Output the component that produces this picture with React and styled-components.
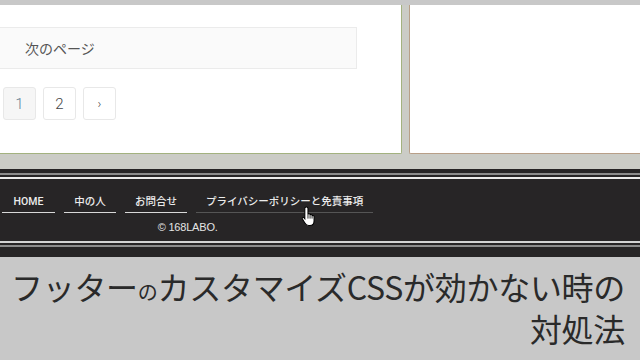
import React from "react";
import styled, { createGlobalStyle } from "styled-components";

const GlobalStyle = createGlobalStyle`
  html, body {
    margin: 0;
    padding: 0;
    width: 640px;
    height: 360px;
    overflow: hidden;
    background: #c8c8c8;
    font-family: "Liberation Sans", "Noto Sans CJK JP", sans-serif;
  }
`;

const Page = styled.div`
  width: 640px;
  height: 360px;
  display: flex;
  flex-direction: column;
  background: #cbccc6;
`;

const TopBand = styled.div`
  height: 5px;
  background: #c8c8c8;
`;

const CardRow = styled.div`
  display: flex;
  gap: 7px;
  height: 149px;
`;

const Card = styled.div`
  background: #fff;
  box-sizing: border-box;
  height: 149px;
  border-bottom: 1px solid ${(p) => p.$line};
  ${(p) => (p.$side === "left" ? `border-right: 1px solid ${p.$line};` : `border-left: 1px solid ${p.$line};`)}
  ${(p) => (p.$side === "left" ? "border-bottom-right-radius: 2px;" : "border-bottom-left-radius: 2px;")}
  width: ${(p) => p.$width || "auto"};
  flex: ${(p) => (p.$width ? "none" : "1")};
  padding-top: 22px;
`;

const NextBox = styled.div`
  box-sizing: border-box;
  width: 357px;
  height: 42px;
  display: flex;
  align-items: center;
  padding-left: 25px;
  background: #fafafa;
  border: 1px solid #ebebeb;
  border-left: none;
  color: #555;
  font-family: "Noto Sans CJK JP", sans-serif;
  font-size: 14px;
`;

const Pager = styled.div`
  display: flex;
  gap: 7px;
  margin: 18px 0 0 3px;
`;

const PageButton = styled.div`
  box-sizing: border-box;
  width: 33px;
  height: 33px;
  display: flex;
  align-items: center;
  justify-content: center;
  border: 1px solid #e8e8e8;
  border-radius: 3px;
  background: ${(p) => (p.$current ? "#f6f6f6" : "#fff")};
  color: ${(p) => (p.$current ? "#5f7f93" : "#444")};
  font-family: "Roboto", "Liberation Sans", sans-serif;
  font-weight: 300;
  font-size: ${(p) => (p.$small ? "13px" : "15px")};
`;

const Gap = styled.div`
  height: 15px;
`;

const Footer = styled.footer`
  position: relative;
  background: #272526;
  padding: 4px 0 10px;
`;

const FooterFrame = styled.div`
  border-top: 2px solid #8c8c8c;
  border-bottom: 2px solid #8c8c8c;
  padding: 2px 0;
`;

const FooterInner = styled.div`
  box-sizing: border-box;
  height: 66px;
  border-top: 2px solid #ececec;
  border-bottom: 2px solid #d4d4d4;
  padding: 12px 0 0 2px;
`;

const FooterBody = styled.div`
  display: inline-flex;
  flex-direction: column;
  align-items: center;
`;

const Nav = styled.nav`
  display: flex;
  gap: 9px;
`;

const NavLink = styled.a`
  display: block;
  padding: 0 10px 3px;
  min-width: ${(p) => p.$min || "auto"};
  text-align: center;
  box-sizing: border-box;
  color: #ececec;
  font-family: "Roboto", "Noto Sans CJK JP", sans-serif;
  font-size: 10.5px;
  font-weight: 500;
  line-height: 15px;
  text-decoration: none;
  border-bottom: 1px solid ${(p) => (p.$dim ? "#555" : "#d8d8d8")};
`;

const Copy = styled.div`
  margin-top: 8px;
  color: #e4e4e4;
  font-size: 11px;
  letter-spacing: -0.2px;
`;

const Cursor = styled.svg`
  position: absolute;
  left: 301px;
  top: 37px;
`;

const TitleArea = styled.div`
  flex: 1;
  background: #c8c8c8;
  padding: 11px 15px 0 0;
  text-align: right;
  color: #2a2a2a;
  font-family: "Noto Sans CJK JP", sans-serif;
  font-size: 32px;
  line-height: 36px;
  letter-spacing: -0.3px;
`;

const Small = styled.span`
  font-size: 20px;
`;

const HandCursor = () => (
  <Cursor width="15" height="21" viewBox="0 0 14 20">
    <path
      d="M5 1 C5.8 1 6.5 1.6 6.5 2.4 V8 C6.7 7.2 8.5 7.2 8.5 8.1 V8.6 C8.7 7.9 10.4 8 10.4 8.9 V9.5 C10.6 8.9 12.3 9 12.3 9.9 V14 C12.3 16.6 10.8 18.6 8.3 18.6 H7.2 C5.3 18.6 4.4 17.6 3.4 15.9 L1.2 12.3 C0.7 11.4 1.8 10.5 2.7 11.2 L3.5 12.2 V2.4 C3.5 1.6 4.2 1 5 1 Z"
      fill="#fff"
      stroke="#000"
      strokeWidth="1"
    />
    <path d="M6.5 8 V12 M8.5 8.6 V12 M10.4 9.4 V12" stroke="#000" strokeWidth="0.8" />
  </Cursor>
);

const App = () => {
  return (
    <>
      <GlobalStyle />
      <Page>
        <TopBand />
        <CardRow>
          <Card $side="left" $line="#a3b27f" $width="402px">
            <NextBox>次のページ</NextBox>
            <Pager>
              <PageButton $current>1</PageButton>
              <PageButton>2</PageButton>
              <PageButton $small>›</PageButton>
            </Pager>
          </Card>
          <Card $side="right" $line="#b89f88" />
        </CardRow>
        <Gap />
        <Footer>
          <FooterFrame>
            <FooterInner>
              <FooterBody>
                <Nav>
                  <NavLink $min="53px">HOME</NavLink>
                  <NavLink $min="52px">中の人</NavLink>
                  <NavLink $min="62px">お問合せ</NavLink>
                  <NavLink $dim>プライバシーポリシーと免責事項</NavLink>
                </Nav>
                <Copy>© 168LABO.</Copy>
              </FooterBody>
            </FooterInner>
          </FooterFrame>
          <HandCursor />
        </Footer>
        <TitleArea>
          フッター<Small>の</Small>カスタマイズCSSが効かない時の
          <br />
          対処法
        </TitleArea>
      </Page>
    </>
  );
};

export default App;
